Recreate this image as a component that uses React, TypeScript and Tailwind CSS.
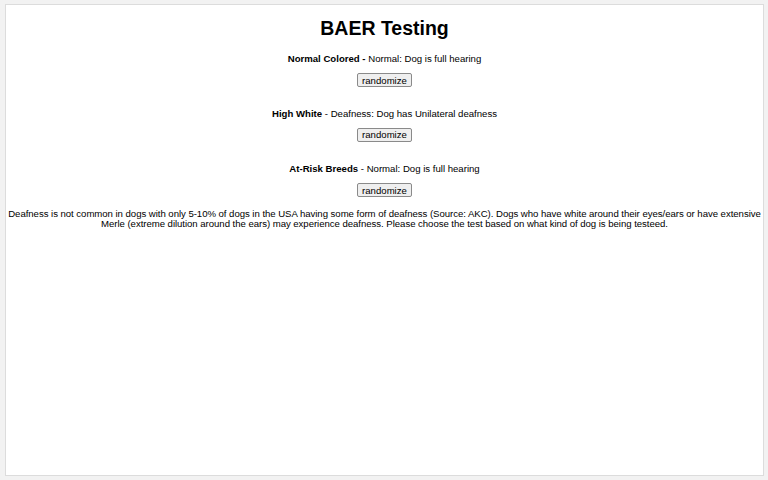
import React from 'react'

const TESTS = [
  { name: 'Normal Colored', sep: '-', result: 'Normal: Dog is full hearing', boldSep: true },
  { name: 'High White', sep: '-', result: 'Deafness: Dog has Unilateral deafness', boldSep: false },
  { name: 'At-Risk Breeds', sep: '-', result: 'Normal: Dog is full hearing', boldSep: false },
]

export default function App() {
  return (
    <div className="w-[768px] h-[480px] bg-[#f2f2f2] pt-[4px] pl-[5px] font-['Liberation_Sans',Arial,sans-serif] text-black">
      <div className="w-[759px] h-[472px] bg-white border border-[#dcdcdc] text-center">
        <h1 className="text-[19.5px] font-bold leading-[24px] mt-[11px]">BAER Testing</h1>
        {TESTS.map((t, i) => (
          <div key={i} className={i === 0 ? 'mt-[13px]' : i === 1 ? 'mt-[17px]' : 'mt-[18px]'}>
            <p className="text-[9.6px] leading-[12px]">
              <b>{t.name}</b>
              {t.boldSep ? <b> {t.sep} </b> : <span> {t.sep} </span>}
              {t.result}
            </p>
            <button className="mt-[8px] h-[14px] px-[4px] text-[9.6px] leading-[11px] bg-[#efefef] border border-[#8a8a8a] rounded-[2px]">
              randomize
            </button>
          </div>
        ))}
        <p className="text-[9.6px] leading-[10.5px] tracking-[-0.04px] mt-[8px]">
          Deafness is not common in dogs with only 5-10% of dogs in the USA having some form of deafness (Source: AKC). Dogs who have white around their eyes/ears or have extensive Merle (extreme dilution around the ears) may experience deafness. Please choose the test based on what kind of dog is being testeed.
        </p>
      </div>
    </div>
  )
}
